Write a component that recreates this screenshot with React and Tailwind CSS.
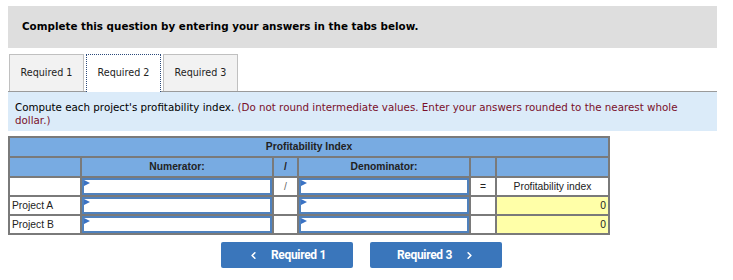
import React from "react";
import { ChevronLeft, ChevronRight } from "lucide-react";

function Inp() {
  return (
    <div className="relative h-full w-full border-2 border-[#4f81bd] bg-white">
      <svg className="absolute left-0 top-0" width="6" height="6" viewBox="0 0 6 6">
        <path d="M0 0 L6 3 L0 6 Z" fill="#3a72c4" />
      </svg>
    </div>
  );
}

export default function App() {
  const verdana = { fontFamily: '"DejaVu Sans", Verdana, sans-serif' };
  const cell = "border-2 border-[#7a7a7a]";
  return (
    <div className="w-[733px] h-[280px] bg-white relative" style={{ fontFamily: '"Liberation Sans", Arial, sans-serif' }}>
      <div className="pt-[6px] pl-[8px] w-[717px]">
        <div className="h-[42px] bg-[#dedede] flex items-center pl-[14px] text-[10.35px] font-bold text-black" style={verdana}>
          Complete this question by entering your answers in the tabs below.
        </div>
        <div className="flex items-end mt-[6px] h-[38px] pl-[1px] gap-[2px] border-b border-[#9a9a9a]">
          <div className="h-[37px] w-[75px] bg-[#f2f2f2] border border-b-0 border-[#c0c0c0] flex items-center justify-center text-[9.6px] text-[#222]" style={verdana}>Required 1</div>
          <div className="h-[38px] w-[75px] -mb-[1px] bg-white border border-dotted border-b-0 border-[#2c4a7a] flex items-center justify-center text-[9.6px] text-[#222]" style={verdana}>Required 2</div>
          <div className="h-[37px] w-[75px] bg-[#f2f2f2] border border-b-0 border-[#c0c0c0] flex items-center justify-center text-[9.6px] text-[#222]" style={verdana}>Required 3</div>
        </div>
        <div className="bg-[#dbebf9] px-[7px] pt-[9px] pb-[5px] text-[10.3px] leading-[12.5px] text-black" style={verdana}>
          <div>
            <span>Compute each project's profitability index. </span>
            <span className="text-[#7a0f2a]">(Do not round intermediate values. Enter your answers rounded to the nearest whole</span>
          </div>
          <div className="text-[#7a0f2a]">dollar.)</div>
        </div>
        <table className="mt-[5px] border-collapse text-[10.3px] text-[#222]">
          <tbody>
            <tr className="h-[20px] bg-[#78abe2]">
              <td colSpan={6} className={`${cell} text-center font-bold text-[#222] w-[600px] p-0`}>Profitability Index</td>
            </tr>
            <tr className="h-[20px] bg-[#78abe2] font-bold">
              <td className={`${cell} w-[72px] p-0`}></td>
              <td className={`${cell} w-[192px] text-center p-0`}>Numerator:</td>
              <td className={`${cell} w-[25px] text-center p-0`}>/</td>
              <td className={`${cell} w-[172px] text-center p-0`}>Denominator:</td>
              <td className={`${cell} w-[26px] p-0`}></td>
              <td className={`${cell} w-[113px] p-0`}></td>
            </tr>
            <tr className="h-[19px] bg-white">
              <td className={`${cell} p-0`}></td>
              <td className={`${cell} p-0 h-[19px]`}><Inp /></td>
              <td className={`${cell} text-center text-[#666] p-0`}>/</td>
              <td className={`${cell} p-0 h-[19px]`}><Inp /></td>
              <td className={`${cell} text-center p-0`}>=</td>
              <td className={`${cell} text-center p-0`}>Profitability index</td>
            </tr>
            <tr className="h-[19px] bg-white">
              <td className={`${cell} pl-[2px] py-0`}>Project A</td>
              <td className={`${cell} p-0 h-[19px]`}><Inp /></td>
              <td className={`${cell} p-0`}></td>
              <td className={`${cell} p-0 h-[19px]`}><Inp /></td>
              <td className={`${cell} p-0`}></td>
              <td className={`${cell} bg-[#ffffa8] text-right pr-[2px] py-0`}>0</td>
            </tr>
            <tr className="h-[19px] bg-white">
              <td className={`${cell} pl-[2px] py-0`}>Project B</td>
              <td className={`${cell} p-0 h-[19px]`}><Inp /></td>
              <td className={`${cell} p-0`}></td>
              <td className={`${cell} p-0 h-[19px]`}><Inp /></td>
              <td className={`${cell} p-0`}></td>
              <td className={`${cell} bg-[#ffffa8] text-right pr-[2px] py-0`}>0</td>
            </tr>
          </tbody>
        </table>
        <div className="flex pl-[213px] gap-[17px] mt-[7px]">
          <button className="w-[132px] h-[26px] bg-[#3a76bb] rounded-[2px] text-white font-bold text-[12px] tracking-[-0.3px] flex items-center justify-center gap-[12px]" style={{ fontFamily: 'Roboto, "Liberation Sans", sans-serif' }}>
            <ChevronLeft size={11} strokeWidth={3.5} /><span>Required 1</span>
          </button>
          <button className="w-[132px] h-[26px] bg-[#3a76bb] rounded-[2px] text-white font-bold text-[12px] tracking-[-0.3px] flex items-center justify-center gap-[12px]" style={{ fontFamily: 'Roboto, "Liberation Sans", sans-serif' }}>
            <span>Required 3</span><ChevronRight size={11} strokeWidth={3.5} />
          </button>
        </div>
      </div>
    </div>
  );
}
